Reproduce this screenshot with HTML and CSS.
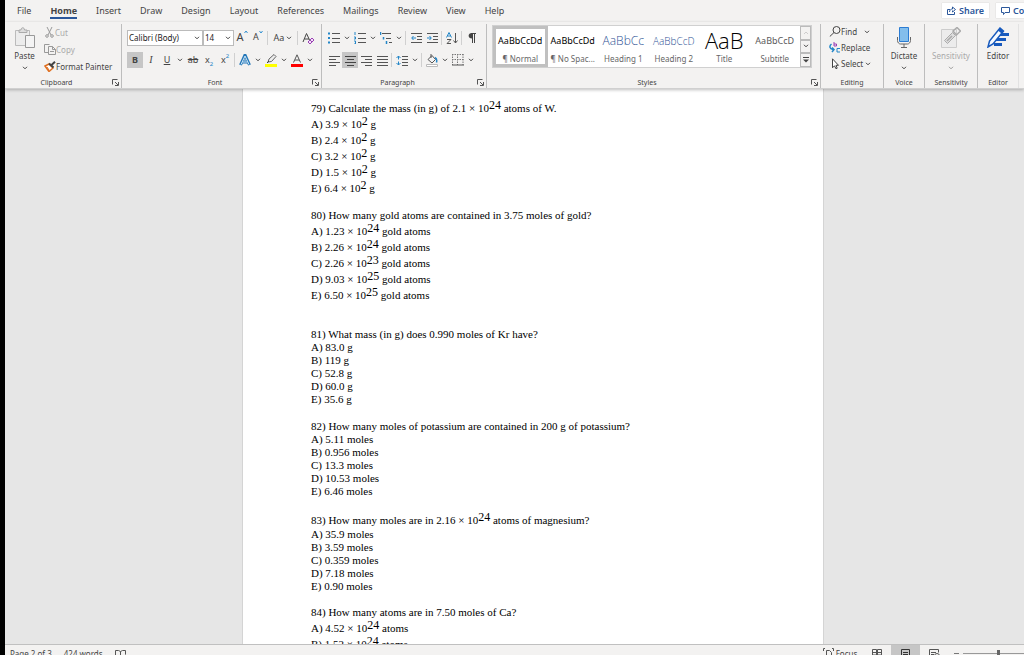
FILE: index.html
```html
<!DOCTYPE html>
<html lang="en">
<head>
<title>Document - Word</title>
<meta charset="utf-8">
<meta name="viewport" content="width=device-width, initial-scale=1">
<link rel="stylesheet" href="styles.css">
</head>

<body>
  <svg class="defs" aria-hidden="true">
    <symbol id="chev" viewBox="0 0 6 4"><path d="M1 .8l2 2 2-2" fill="none" stroke="#444"/></symbol>
    <symbol id="launch" viewBox="0 0 7 7"><path d="M.5 5.500V.5H5.500M3 3l3 3M6.500 3v3.500H3" fill="none" stroke="#555"/></symbol>
  </svg>

  <div class="app">
    <header class="topbar">
      <nav class="tabs">
        <a href="#">File</a>
        <a href="#" class="current">Home</a>
        <a href="#">Insert</a>
        <a href="#">Draw</a>
        <a href="#">Design</a>
        <a href="#">Layout</a>
        <a href="#">References</a>
        <a href="#">Mailings</a>
        <a href="#">Review</a>
        <a href="#">View</a>
        <a href="#">Help</a>
      </nav>
      <div class="actions">
        <button><svg width="9" height="9" viewBox="0 0 9 9" fill="none" stroke="#2b579a"><path d="M3 3.500H.5v5h7V6M2.500 6c0-2 1.500-3 3-3V1l3 2.500-3 2.500V4.500"/></svg>Share</button>
        <button><svg width="9" height="9" viewBox="0 0 9 9" fill="none" stroke="#2b579a"><path d="M.5 1.500h8v5H4L2.500 8.500v-2h-2z"/></svg>Comments</button>
      </div>
    </header>

    <div class="ribbon">
      <section class="group clipboard">
        <div class="content">
          <button class="big">
            <svg width="20" height="21" viewBox="0 0 20 21"><path d="M.5 3.500h14v15H.5z" fill="#ececec" stroke="#bbb"/><path d="M4 5.500V3h2c0-3 3.500-3 3.500 0H12v2.500z" fill="#ddd" stroke="#aaa"/><path d="M10.500 8.500h9v12h-9z" fill="#f4f4f4" stroke="#999"/></svg>
            Paste
            <svg class="chev"><use href="#chev"/></svg>
          </button>
          <div class="stack">
            <button disabled><svg width="11" height="11" viewBox="0 0 11 11" fill="none" stroke="#999"><path d="M3 0l4 8M8 0L4 8"/><circle cx="3" cy="9" r="1.300"/><circle cx="8" cy="9" r="1.300"/></svg>Cut</button>
            <button disabled><svg width="12" height="11" viewBox="0 0 12 11" fill="none" stroke="#999"><path d="M4 8.500H.5V.5H5.500"/><path d="M4.500 2.500h4l3 3v5h-7zM8.500 2.500v3h3M6 7.500h4"/></svg>Copy</button>
            <button><svg width="12" height="11" viewBox="0 0 12 11"><path d="M1 5l4-2 4 4-4 3.500z" fill="#fff" stroke="#e07020" stroke-width="1.500"/><path d="M3 6l2 3" stroke="#e07020"/><path d="M5 2.500l4.500 4M7.500 4L11 .8" stroke="#444" stroke-width="2"/></svg>Format Painter</button>
          </div>
        </div>
        <footer>Clipboard<svg class="launch"><use href="#launch"/></svg></footer>
      </section>

      <section class="group font">
        <div class="content rows">
          <div class="row">
            <label class="combo family"><select aria-label="Font"><option>Calibri (Body)</option></select><svg class="chev"><use href="#chev"/></svg></label>
            <label class="combo size"><select aria-label="Font size"><option>14</option></select><svg class="chev"><use href="#chev"/></svg></label>
            <button class="tool letter" title="Grow font">A<svg width="4" height="4" viewBox="0 0 4 4"><path d="M.5 3L2 1l1.500 2" fill="none" stroke="#2f8fd0"/></svg></button>
            <button class="tool letter small" title="Shrink font">A<svg width="4" height="4" viewBox="0 0 4 4"><path d="M.5 1L2 3l1.500-2" fill="none" stroke="#2f8fd0"/></svg></button>
            <i class="sep"></i>
            <button class="tool case">Aa<svg class="chev"><use href="#chev"/></svg></button>
            <i class="sep"></i>
            <button class="tool" title="Clear formatting"><svg width="13" height="13" viewBox="0 0 13 13" fill="none"><path d="M1 10L4.500 1.500 8 9M2.500 7H7" stroke="#444"/><path d="M6 10l4-4 2 2-4 4z" fill="#f3e6f7" stroke="#9a3fb5"/><path d="M8 8l2 2" stroke="#9a3fb5"/></svg></button>
          </div>
          <div class="row">
            <button class="tool on"><b>B</b></button>
            <button class="tool"><em>I</em></button>
            <button class="tool"><u>U</u></button>
            <button class="drop" title="Underline style"><svg class="chev"><use href="#chev"/></svg></button>
            <button class="tool"><s>ab</s></button>
            <button class="tool script">x<sub>2</sub></button>
            <button class="tool script">x<sup>2</sup></button>
            <i class="sep"></i>
            <button class="tool" title="Text effects"><svg width="12" height="12" viewBox="0 0 12 12" fill="none"><path d="M1.500 11L6 1l4.500 10M3 8h6" stroke="#2477b8" stroke-width="3"/><path d="M2 10.500L6 2l4 8.500M3.500 8h5" stroke="#cfe8f8"/></svg></button>
            <button class="drop" title="More text effects"><svg class="chev"><use href="#chev"/></svg></button>
            <button class="tool" title="Highlight"><svg width="12" height="13" viewBox="0 0 12 13"><path d="M3 8l1-3 5-4.500 2 2L6.500 7.500z" fill="#eee" stroke="#666"/><path d="M2 9l2-2" stroke="#444"/><path d="M0 10h12v3H0z" fill="#ff0"/></svg></button>
            <button class="drop" title="Highlight colours"><svg class="chev"><use href="#chev"/></svg></button>
            <button class="tool" title="Font color"><svg width="12" height="13" viewBox="0 0 12 13"><path d="M2.500 8.500L6 .8l3.500 7.700M4 6h4" fill="none" stroke="#555"/><path d="M0 10h12v3H0z" fill="red"/></svg></button>
            <button class="drop" title="Font colours"><svg class="chev"><use href="#chev"/></svg></button>
          </div>
        </div>
        <footer>Font<svg class="launch"><use href="#launch"/></svg></footer>
      </section>

      <section class="group paragraph">
        <div class="content rows">
          <div class="row">
            <button class="tool" title="Bullets"><svg width="12" height="12" viewBox="0 0 12 12"><path d="M0 1.500h2M0 6h2M0 10.500h2" stroke="#2386c8" stroke-width="2"/><path d="M4 1.500h8M4 6.500h8M4 10.500h8" stroke="#555"/></svg></button>
            <button class="drop" title="Bullet styles"><svg class="chev"><use href="#chev"/></svg></button>
            <button class="tool" title="Numbering"><svg width="12" height="12" viewBox="0 0 12 12"><path d="M1 0v3M0 5h1.500v2H0M0 9h1.500v3H0" fill="none" stroke="#2386c8"/><path d="M4 1.500h8M4 6.500h8M4 10.500h8" stroke="#555"/></svg></button>
            <button class="drop" title="Number styles"><svg class="chev"><use href="#chev"/></svg></button>
            <button class="tool" title="Multilevel list"><svg width="12" height="12" viewBox="0 0 12 12"><path d="M.5 0v3M3.500 5v2.500M6.500 9v3" stroke="#2386c8" stroke-width="1.500"/><path d="M2 1.500h9M6 6.500h5M9 10.500h3" stroke="#555"/></svg></button>
            <button class="drop" title="List levels"><svg class="chev"><use href="#chev"/></svg></button>
            <i class="sep"></i>
            <button class="tool" title="Decrease indent"><svg width="11" height="10" viewBox="0 0 11 10"><path d="M0 .5h11M6 3.500h5M6 6.500h5M0 9.500h11" stroke="#555"/><path d="M5 5H1M2.500 3L.7 5l1.800 2" fill="none" stroke="#2386c8"/></svg></button>
            <button class="tool" title="Increase indent"><svg width="11" height="10" viewBox="0 0 11 10"><path d="M0 .5h11M6 3.500h5M6 6.500h5M0 9.500h11" stroke="#555"/><path d="M0 5h4M2.500 3l1.800 2-1.800 2" fill="none" stroke="#2386c8"/></svg></button>
            <i class="sep"></i>
            <button class="tool" title="Sort"><svg width="12" height="12" viewBox="0 0 12 12" fill="none"><path d="M.5 5.500L3 .5l2.500 5M1.500 4h3" stroke="#2386c8"/><path d="M1 7.500h4L1 11.500h4" stroke="#555"/><path d="M9.500 1v10M7.500 8.500l2 2.500 2-2.500" stroke="#555"/></svg></button>
            <i class="sep"></i>
            <button class="tool" title="Show marks"><svg width="8" height="10" viewBox="0 0 8 10"><path d="M4 0C-.5 0-.5 5.500 4 5.500z" fill="#444"/><path d="M3 .5h5M4.500 0v10M6.500 0v10" stroke="#444"/></svg></button>
          </div>
          <div class="row">
            <button class="tool" title="Align left"><svg width="11" height="11" viewBox="0 0 11 11"><path d="M0 1.500h11M0 4.500h7M0 7.500h11M0 10.500h7" stroke="#555"/></svg></button>
            <button class="tool on" title="Center"><svg width="11" height="11" viewBox="0 0 11 11"><path d="M0 1.500h11M2 4.500h7M0 7.500h11M2 10.500h7" stroke="#444"/></svg></button>
            <button class="tool" title="Align right"><svg width="11" height="11" viewBox="0 0 11 11"><path d="M0 1.500h11M4 4.500h7M0 7.500h11M4 10.500h7" stroke="#555"/></svg></button>
            <button class="tool" title="Justify"><svg width="11" height="11" viewBox="0 0 11 11"><path d="M0 1.500h11M0 4.500h11M0 7.500h11M0 10.500h11" stroke="#555"/></svg></button>
            <i class="sep"></i>
            <button class="tool" title="Line spacing"><svg width="12" height="11" viewBox="0 0 12 11"><path d="M2.500 1v3.500M2.500 6.500V10M.5 3l2-2 2 2M.5 8l2 2 2-2" fill="none" stroke="#2386c8"/><path d="M6 1.500h6M6 4.500h6M6 7.500h6M6 10.500h6" stroke="#555"/></svg></button>
            <button class="drop" title="Spacing options"><svg class="chev"><use href="#chev"/></svg></button>
            <i class="sep"></i>
            <button class="tool" title="Shading"><svg width="12" height="13" viewBox="0 0 12 13"><path d="M2 5.500L6 1.500l3.500 4L6 9z" fill="#f4f4f4" stroke="#555"/><path d="M5 0v4" stroke="#555"/><path d="M9 3.500c2 1 2 3 1.500 5" fill="none" stroke="#2386c8" stroke-width="1.500"/><path d="M.5 10.500h11v2H.5z" fill="#fff" stroke="#bbb"/></svg></button>
            <button class="drop" title="Shading colours"><svg class="chev"><use href="#chev"/></svg></button>
            <button class="tool" title="Borders"><svg width="12" height="12" viewBox="0 0 12 12"><path d="M.5 0v11M5.500 0v11M11 0v11M0 .5h12M0 5.500h12" stroke="#777" stroke-dasharray="1.500 1"/><path d="M0 11h12" stroke="#555"/></svg></button>
            <button class="drop" title="Border styles"><svg class="chev"><use href="#chev"/></svg></button>
          </div>
        </div>
        <footer>Paragraph<svg class="launch"><use href="#launch"/></svg></footer>
      </section>

      <section class="group styles">
        <div class="content">
          <div class="gallery">
            <button class="style selected"><span class="sample">AaBbCcDd</span><span>¶ Normal</span></button>
            <button class="style"><span class="sample">AaBbCcDd</span><span>¶ No Spac...</span></button>
            <button class="style heading"><span class="sample">AaBbCc</span><span>Heading 1</span></button>
            <button class="style heading2"><span class="sample">AaBbCcD</span><span>Heading 2</span></button>
            <button class="style title"><span class="sample">AaB</span><span>Title</span></button>
            <button class="style subtitle"><span class="sample">AaBbCcD</span><span>Subtitle</span></button>
            <div class="scroller">
              <button disabled title="Up"><svg class="chev" viewBox="0 0 6 4"><path d="M1 3l2-2 2 2" fill="none" stroke="#aaa"/></svg></button>
              <button title="Down"><svg class="chev"><use href="#chev"/></svg></button>
              <button title="More"><svg width="6" height="6" viewBox="0 0 6 6"><path d="M0 .5h6" stroke="#444"/><path d="M0 2.500h6L3 5.500z" fill="#444"/></svg></button>
            </div>
          </div>
        </div>
        <footer>Styles<svg class="launch"><use href="#launch"/></svg></footer>
      </section>

      <section class="group editing">
        <div class="content">
          <div class="stack">
            <button><svg width="12" height="11" viewBox="0 0 12 11" fill="none" stroke="#444"><circle cx="7.500" cy="4" r="3.500"/><path d="M5 6.500L.8 10.500"/></svg>Find<svg class="chev far"><use href="#chev"/></svg></button>
            <button><svg width="12" height="11" viewBox="0 0 12 11" fill="none"><path d="M5 0v4h2.500V2H5" stroke="#9a3fb5"/><path d="M2.500 2C0 4 .5 7 4 7.500M3 5.500l2 2-2 2.500" stroke="#2386c8" stroke-width="1.500"/><path d="M11 6.500H8v3.500h3" stroke="#2386c8"/></svg>Replace</button>
            <button><svg width="12" height="11" viewBox="0 0 12 11"><path d="M3.500.8v9l2-2 1.500 3 1.200-.6L7 7.300h2.500z" fill="#fff" stroke="#444"/></svg>Select<svg class="chev"><use href="#chev"/></svg></button>
          </div>
        </div>
        <footer>Editing</footer>
      </section>

      <section class="group voice">
        <div class="content">
          <button class="big">
            <svg width="14" height="21" viewBox="0 0 14 21"><path d="M2.500.5h9v14h-9z" fill="#83beec" stroke="#2b7cd3"/><path d="M.5 10v3.500c0 2 1.500 3.500 3 3.500h7c1.500 0 3-1.500 3-3.500V10M7 17v3M4 20.500h6" fill="none" stroke="#666"/></svg>
            Dictate
            <svg class="chev"><use href="#chev"/></svg>
          </button>
        </div>
        <footer>Voice</footer>
      </section>

      <section class="group sensitivity">
        <div class="content">
          <button class="big" disabled>
            <svg width="20" height="21" viewBox="0 0 20 21"><path d="M.5 2.500h15v18H.5z" fill="#ececec" stroke="#ccc"/><path d="M3.500 13.500l8-8 3 3-8 8z" fill="#ddd" stroke="#aaa"/><path d="M6 14l5-5M12 4l4-3.500 3.500 3.500-4 4z" fill="none" stroke="#aaa" stroke-width="1.500"/></svg>
            Sensitivity
            <svg class="chev"><use href="#chev"/></svg>
          </button>
        </div>
        <footer>Sensitivity</footer>
      </section>

      <section class="group editor">
        <div class="content">
          <button class="big">
            <svg width="22" height="21" viewBox="0 0 22 21"><path d="M12 7.500h10M9 12.500h10M7 17.500h8" stroke="#185abd" stroke-width="3"/><path d="M1 20l1.500-6L13 1l3.500 3L6 17z" fill="#f6faff" stroke="#185abd" stroke-width="1.500"/><path d="M11 3.500L13 1l3.500 3-2 2.500z" fill="#185abd"/></svg>
            Editor
          </button>
        </div>
        <footer>Editor</footer>
      </section>
    </div>

    <main class="workspace">
      <article class="sheet">
        <section class="question tall">
          <p>79) Calculate the mass (in g) of 2.1 × 10<sup>24</sup> atoms of W.</p>
          <p>A) 3.9 × 10<sup>2</sup> g</p>
          <p>B) 2.4 × 10<sup>2</sup> g</p>
          <p>C) 3.2 × 10<sup>2</sup> g</p>
          <p>D) 1.5 × 10<sup>2</sup> g</p>
          <p>E) 6.4 × 10<sup>2</sup> g</p>
        </section>
        <section class="question tall">
          <p>80) How many gold atoms are contained in 3.75 moles of gold?</p>
          <p>A) 1.23 × 10<sup>24</sup> gold atoms</p>
          <p>B) 2.26 × 10<sup>24</sup> gold atoms</p>
          <p>C) 2.26 × 10<sup>23</sup> gold atoms</p>
          <p>D) 9.03 × 10<sup>25</sup> gold atoms</p>
          <p>E) 6.50 × 10<sup>25</sup> gold atoms</p>
        </section>
        <section class="question spaced">
          <p>81) What mass (in g) does 0.990 moles of Kr have?</p>
          <p>A) 83.0 g</p>
          <p>B) 119 g</p>
          <p>C) 52.8 g</p>
          <p>D) 60.0 g</p>
          <p>E) 35.6 g</p>
        </section>
        <section class="question">
          <p>82) How many moles of potassium are contained in 200 g of potassium?</p>
          <p>A) 5.11 moles</p>
          <p>B) 0.956 moles</p>
          <p>C) 13.3 moles</p>
          <p>D) 10.53 moles</p>
          <p>E) 6.46 moles</p>
        </section>
        <section class="question">
          <p class="raised">83) How many moles are in 2.16 × 10<sup>24</sup> atoms of magnesium?</p>
          <p>A) 35.9 moles</p>
          <p>B) 3.59 moles</p>
          <p>C) 0.359 moles</p>
          <p>D) 7.18 moles</p>
          <p>E) 0.90 moles</p>
        </section>
        <section class="question tall">
          <p>84) How many atoms are in 7.50 moles of Ca?</p>
          <p>A) 4.52 × 10<sup>24</sup> atoms</p>
          <p>B) 1.52 × 10<sup>24</sup> atoms</p>
        </section>
      </article>
    </main>

    <footer class="statusbar">
      <div class="info">
        <span>Page 2 of 3</span>
        <span>424 words</span>
        <svg width="11" height="10" viewBox="0 0 11 10" fill="none" stroke="#555"><path d="M5.500 9.500h-5v-8h3l2 1 2-1h3v4M5.500 2.500v7M7 7l1.500 2L11 5.500"/></svg>
      </div>
      <div class="views">
        <button class="focus"><svg width="11" height="11" viewBox="0 0 11 11" fill="none" stroke="#555"><path d="M.5 3V.5H2M9 .5h1.500V3M3.500 2.500h3l2 2v5h-5zM.5 8v2.500H2"/></svg>Focus</button>
        <button title="Read mode"><svg width="10" height="10" viewBox="0 0 10 10" fill="none" stroke="#555"><path d="M.5.5h4v8h-4zM5.500.5h4v8h-4zM1 3.500h3M6 3.500h3M1 6h3M6 6h3"/></svg></button>
        <button class="on" title="Print layout"><svg width="9" height="10" viewBox="0 0 9 10" fill="none" stroke="#333"><path d="M.5.500h8v9h-8zM2 3.500h5M2 5.500h5M2 7.500h5"/></svg></button>
        <button title="Web layout"><svg width="11" height="10" viewBox="0 0 11 10" fill="none" stroke="#555"><path d="M5 8.500H.5v-8h9v3M2 3.500h5M2 5.500h3"/><circle cx="8" cy="7" r="2.500"/></svg></button>
        <button class="minus" title="Zoom out"><svg width="5" height="1"><path d="M0 .5h5" stroke="#777"/></svg></button>
        <input type="range" aria-label="Zoom" min="0" max="100" value="50">
      </div>
    </footer>
  </div>
</body>

</html>
```
FILE: styles.css
```css
* {
  box-sizing: border-box;
}
html,
body {
  height: 100%;
}
body {
  margin: 0;
  overflow: hidden;
  background: #000;
  color: #444;
  font: 8px/10px "Noto Sans", "Open Sans", sans-serif;
}
button,
select {
  padding: 0;
  border: 0;
  background: transparent;
  color: inherit;
  font: inherit;
  white-space: nowrap;
}
button:disabled {
  color: #aaa;
}
button:disabled .chev {
  opacity: .5;
}
svg {
  flex: none;
}
.defs {
  display: none;
}
.chev {
  width: 6px;
  height: 4px;
}
.app {
  display: grid;
  grid-template-rows: 22px 67px 1fr 11px;
  grid-template-columns: minmax(0, 1fr);
  height: 100%;
  margin-left: 5px;
  background: #f3f2f1;
}

/* tabs */
.topbar {
  display: flex;
  overflow: hidden;
}
.tabs {
  display: flex;
  flex: 1;
  gap: 19px;
  padding-left: 12px;
  font-size: 9px;
  line-height: 16px;
}
.tabs a {
  height: 19px;
  padding-top: 3px;
  color: #444;
  text-decoration: none;
}
.tabs .current {
  border-bottom: 2px solid #2b579a;
  font-weight: bold;
}
.actions {
  display: flex;
  flex: 0 0 82px;
  gap: 7px;
  min-width: 0;
  padding-top: 3px;
}
.actions button {
  display: flex;
  flex: none;
  align-items: center;
  gap: 3px;
  height: 15px;
  padding: 0 5px;
  background: #fff;
  box-shadow: 0 0 1px #bbb;
  color: #2b579a;
  font-size: 9px;
  font-weight: 600;
}

/* ribbon */
.ribbon {
  display: flex;
  z-index: 1;
  padding: 2px 5px 0 0;
  border-bottom: 1px solid #d0d0d0;
  background: #f3f2f1;
  box-shadow: 0 1px 3px rgba(0, 0, 0, .25);
}
.group {
  display: flex;
  flex: none;
  flex-direction: column;
  border-right: 1px solid #bdbdbd;
}
.content {
  display: flex;
  flex: 1;
}
.group footer {
  display: flex;
  position: relative;
  justify-content: center;
  font-size: 7px;
}
.clipboard footer,
.font footer,
.paragraph footer,
.styles footer {
  padding-right: 13px;
}
.launch {
  position: absolute;
  right: 2px;
  top: 1px;
  width: 7px;
  height: 7px;
}
.clipboard { width: 117px; }
.font { width: 200px; }
.paragraph { width: 165px; }
.styles { flex: 1; }
.editing { width: 63px; }
.voice { width: 41px; }
.sensitivity { width: 53px; }
.editor { width: 41px; border-color: #e2e2e2; }
.big {
  display: flex;
  flex-direction: column;
  align-items: center;
  flex: 1;
  gap: 3px;
  padding-top: 3px;
}
.big .chev {
  margin-top: 2px;
}
.clipboard .big {
  flex: 0 0 39px;
}
.stack {
  display: flex;
  flex-direction: column;
  gap: 6px;
  padding-top: 3px;
}
.stack button {
  display: flex;
  align-items: center;
  height: 11px;
}
.stack .chev {
  margin-left: 2px;
}
.stack .far {
  margin-left: 7px;
}
.editing .stack {
  gap: 5px;
  padding: 2px 0 0 8px;
}
.rows {
  flex-direction: column;
  gap: 6px;
  padding: 6px 0 0 5px;
}
.paragraph .rows {
  padding-left: 4px;
}
.row {
  display: flex;
  align-items: center;
  height: 16px;
}
.sep {
  width: 1px;
  height: 14px;
  margin: 0 2px 0 1px;
  background: #d0d0d0;
}
.combo {
  display: flex;
  position: relative;
  align-items: center;
  height: 16px;
  border: 1px solid #bbb;
  background: #fff;
}
.combo select {
  width: 100%;
  height: 14px;
  padding-left: 1px;
  appearance: none;
  color: #222;
}
.combo .chev {
  position: absolute;
  right: 2px;
  pointer-events: none;
}
.family { width: 76px; }
.size { width: 31px; }
.tool {
  display: flex;
  align-items: center;
  justify-content: center;
  width: 16px;
  height: 16px;
  font-size: 9px;
}
.drop {
  display: flex;
  align-items: center;
  justify-content: center;
  width: 10px;
  height: 16px;
}
.on {
  background: #c6c6c6;
}
.letter {
  align-items: flex-start;
  font-size: 11px;
  line-height: 14px;
}
.small {
  font-size: 9px;
}
.case {
  gap: 2px;
  width: 26px;
}
.tool em {
  font-family: "Liberation Serif", serif;
  font-size: 10px;
}
.script sub,
.script sup {
  color: #2386c8;
  font-size: 6px;
  line-height: 6px;
}
.script sub {
  align-self: flex-end;
  padding-bottom: 1px;
}
.script sup {
  align-self: flex-start;
  padding-top: 1px;
}

/* style gallery */
.styles .content {
  padding: 1px 8px 0 5px;
}
.gallery {
  display: flex;
  flex: 1;
  height: 43px;
  border: 1px solid #d0d0d0;
  background: #fff;
}
.style {
  display: flex;
  flex: 1 1 0;
  flex-direction: column;
  align-items: center;
  min-width: 0;
  padding: 4px 1px 0;
  color: #666;
}
.selected {
  padding: 1px 0 0;
  border: 3px solid #c0c0c0;
}
.sample {
  height: 24px;
  color: #000;
  font-size: 9px;
  line-height: 22px;
}
.heading .sample {
  color: #2f5496;
  font: 300 12px/22px "Open Sans", sans-serif;
}
.heading2 .sample {
  color: #2f5496;
  font: 300 10px/22px "Open Sans", sans-serif;
}
.title .sample {
  font: 300 22px/20px "Open Sans", sans-serif;
}
.subtitle .sample {
  color: #5a5a5a;
}
.scroller {
  display: grid;
  grid-template-rows: repeat(3, 1fr);
  width: 11px;
}
.scroller button {
  display: flex;
  align-items: center;
  justify-content: center;
  border: 1px solid #bbb;
  background: #f3f2f1;
}

/* document */
.workspace {
  padding-left: 37px;
  overflow: hidden;
  background: #e6e6e6;
}
.sheet {
  display: flow-root;
  width: 582px;
  min-height: 100%;
  margin: 0 auto;
  padding: 0 68px;
  border: solid #d4d4d4;
  border-width: 0 1px;
  background: #fff;
  color: #000;
  font: 11px/13px "Liberation Serif", "Times New Roman", serif;
}
.question {
  margin-top: 14px;
}
.question p {
  margin: 0;
}
.question sup {
  font-size: 12px;
  line-height: 0;
  vertical-align: 3px;
}
.tall {
  margin-top: 11px;
  line-height: 16px;
}
.spaced {
  margin-top: 25px;
}
.raised {
  line-height: 16px;
}

/* status bar */
.statusbar {
  display: flex;
  justify-content: space-between;
  overflow: hidden;
  border-top: 1px solid #c0c0c0;
}
.info,
.views {
  display: flex;
  align-items: center;
  height: 17px;
}
.info {
  gap: 12px;
  padding-left: 5px;
}
.views {
  flex: 0 0 200px;
  min-width: 0;
}
.views button {
  display: flex;
  flex: none;
  align-items: center;
  justify-content: center;
  width: 29px;
  height: 17px;
}
.views .focus {
  gap: 2px;
  width: 32px;
  margin-right: 6px;
}
.views .minus {
  width: 14px;
}
.views input {
  flex: none;
  width: 70px;
  height: 10px;
  margin: 0;
  appearance: none;
  background: linear-gradient(#999, #999) center / 100% 1px no-repeat;
}
.views input::-webkit-slider-thumb {
  width: 3px;
  height: 8px;
  appearance: none;
  background: #666;
}
```
